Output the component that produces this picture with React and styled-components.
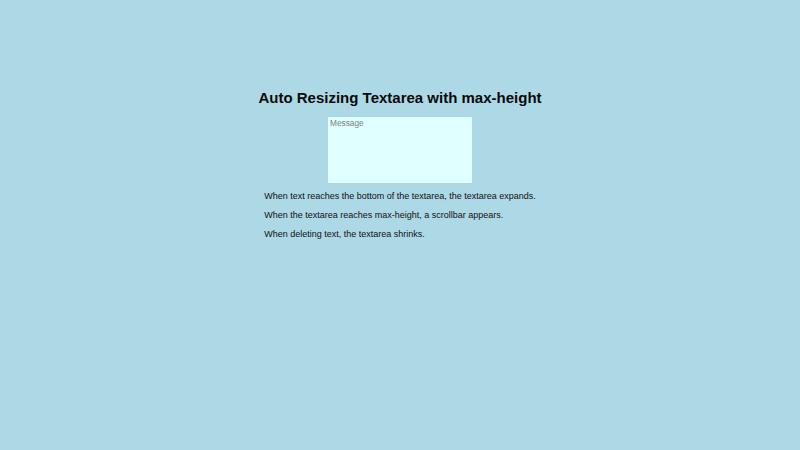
import React, { useRef } from 'react';
import styled, { createGlobalStyle } from 'styled-components';

const GlobalStyle = createGlobalStyle`
  html, body {
    margin: 0;
    padding: 0;
    background-color: lightblue;
    font-family: "Liberation Sans", Arial, sans-serif;
  }
`;

const Page = styled.div`
  display: flex;
  flex-direction: column;
  align-items: center;
  padding-top: 89px;
`;

const Title = styled.h1`
  margin: 0 0 11px;
  font-size: 15px;
  font-weight: bold;
  color: #0a0a0a;
`;

const Message = styled.textarea`
  box-sizing: border-box;
  width: 144px;
  height: 66px;
  max-height: 120px;
  padding: 1px 2px;
  border: none;
  outline: none;
  resize: none;
  overflow-y: auto;
  background-color: lightcyan;
  font-family: "Liberation Sans", Arial, sans-serif;
  font-size: 8.3px;
  color: #111;

  &::placeholder {
    color: #808080;
  }
`;

const Notes = styled.div`
  display: flex;
  flex-direction: column;
  gap: 8px;
  margin-top: 8px;
`;

const Note = styled.p`
  margin: 0;
  font-size: 9px;
  line-height: 11px;
  color: #111;
`;

export default function App() {
  const ref = useRef(null);

  const grow = () => {
    const el = ref.current;
    if (!el) return;
    el.style.height = 'auto';
    el.style.height = Math.max(66, el.scrollHeight) + 'px';
  };

  return (
    <>
      <GlobalStyle />
      <Page>
        <Title>Auto Resizing Textarea with max-height</Title>
        <Message ref={ref} placeholder="Message" onInput={grow} />
        <Notes>
          <Note>When text reaches the bottom of the textarea, the textarea expands.</Note>
          <Note>When the textarea reaches max-height, a scrollbar appears.</Note>
          <Note>When deleting text, the textarea shrinks.</Note>
        </Notes>
      </Page>
    </>
  );
}
